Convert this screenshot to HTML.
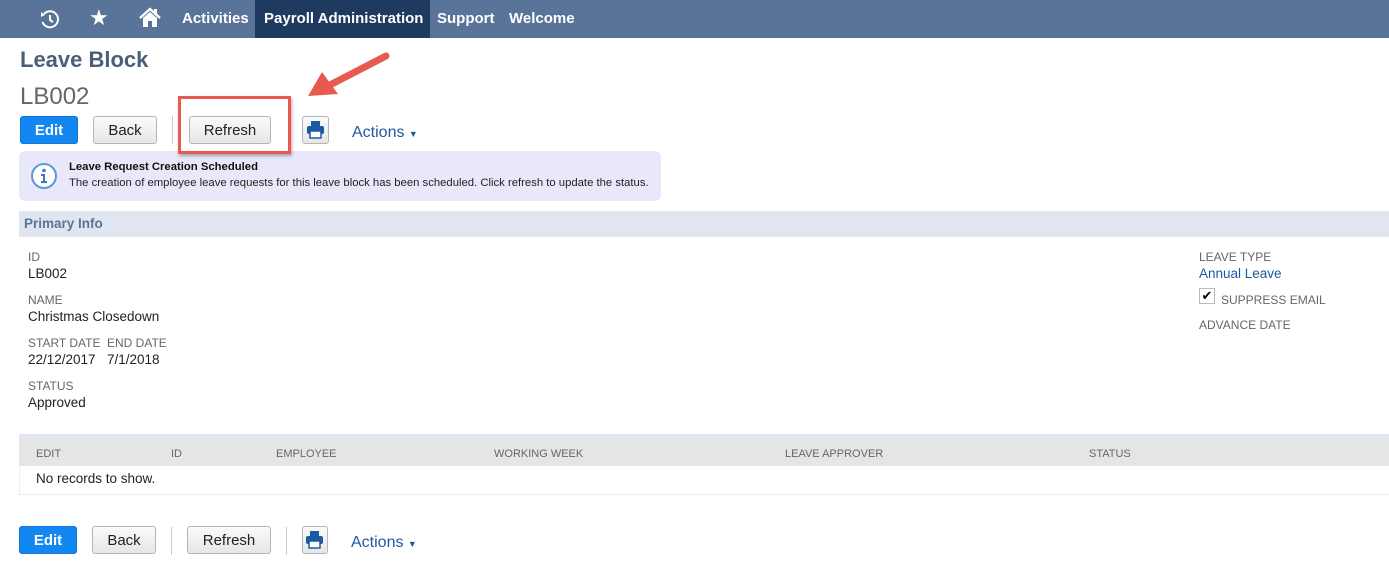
<!DOCTYPE html>
<html><head><style>
body{margin:0;width:1389px;height:568px;overflow:hidden;background:#fff;font-family:"Liberation Sans",sans-serif;position:relative}
.a{position:absolute;white-space:nowrap}
.nav{position:absolute;left:0;top:0;width:1389px;height:38px;background:#5a7499}
.nt{position:absolute;top:0;height:38px;line-height:38px;color:#fff;font-weight:bold;font-size:15px}
.btn{position:absolute;border:1px solid #b5b5b5;border-radius:3px;background:linear-gradient(#fafafa,#e6e6e6);font-size:15px;color:#222;text-align:center;line-height:28px;box-sizing:border-box;height:28px}
.edit{background:#1287f0;border-color:#0f76d8;color:#fff;font-weight:bold}
.sep{position:absolute;width:1px;height:28px;background:#ccc}
.lbl{font-size:12px;color:#666}
.val{font-size:13.5px;color:#222}
.act{color:#1c5aa0;font-size:16px}
.th{font-size:11px;color:#666;top:448px}
</style></head><body>
<div class="nav"></div>
<div class="a" style="left:255px;top:0;width:175px;height:38px;background:#1f3a5f"></div>
<svg class="a" style="left:38px;top:7px" width="24" height="24" viewBox="0 0 24 24"><path d="M6 7 A8 8 0 1 1 4.5 15" fill="none" stroke="#fff" stroke-width="2"/><path d="M3 5 L7 8 L3 10Z" fill="#fff"/><path d="M12 8 V13 L15 15" stroke="#fff" stroke-width="2" fill="none"/></svg>
<div class="a" style="left:89px;top:5px;color:#fff;font-size:22px">★</div>
<svg class="a" style="left:138px;top:6px" width="24" height="24" viewBox="0 0 24 24"><path d="M2 12 L12 3 L22 12" fill="none" stroke="#fff" stroke-width="2.5"/><path d="M5 12 V21 H10 V15 H14 V21 H19 V12 L12 6Z" fill="#fff"/><rect x="16" y="3" width="3" height="5" fill="#fff"/></svg>
<div class="nt" style="left:182px">Activities</div>
<div class="nt" style="left:264px">Payroll Administration</div>
<div class="nt" style="left:437px">Support</div>
<div class="nt" style="left:509px">Welcome</div>

<div class="a" style="left:20px;top:47px;font-size:22px;font-weight:bold;color:#4b5f79">Leave Block</div>
<div class="a" style="left:20px;top:83px;font-size:24px;color:#666">LB002</div>

<div class="a" style="left:19px;top:151px;width:642px;height:50px;background:#e8e8fa;border-radius:6px"></div>

<div class="btn edit" style="left:20px;top:116px;width:58px">Edit</div>
<div class="btn" style="left:93px;top:116px;width:64px">Back</div>
<div class="sep" style="left:172px;top:116px"></div>
<div class="btn" style="left:189px;top:116px;width:82px">Refresh</div>
<div class="a" style="left:178px;top:96px;width:107px;height:52px;border:3px solid #e85a4f;box-shadow:1px 2px 3px rgba(0,0,0,.3);z-index:2"></div>
<div class="btn" style="left:302px;top:116px;width:27px"></div>
<svg class="a" style="left:306px;top:120px" width="19" height="19" viewBox="0 0 19 19"><rect x="5" y="1" width="9" height="5" fill="#1c5aa0"/><rect x="1" y="6" width="17" height="8" rx="2" fill="#1c5aa0"/><rect x="4" y="11" width="11" height="7" fill="#fff" stroke="#1c5aa0" stroke-width="1.5"/></svg>
<div class="a act" style="left:352px;top:124px">Actions <span style="font-size:9px">▼</span></div>
<svg class="a" style="left:300px;top:48px" width="95" height="50"><line x1="86" y1="8" x2="28" y2="38" stroke="#e85a4f" stroke-width="7" stroke-linecap="round"/><path d="M8 48 L22 24 L38 46Z" fill="#e85a4f"/></svg>

<svg class="a" style="left:30px;top:162px" width="28" height="28"><circle cx="14" cy="14" r="12" fill="#fff" stroke="#5b9bd5" stroke-width="2"/><circle cx="14" cy="8.5" r="1.8" fill="#3a7bc0"/><path d="M11 12 H15 V19 H17 V21 H11 V19 H13 V14 H11Z" fill="#3a7bc0"/></svg>
<div class="a" style="left:69px;top:161px;font-size:11.3px;font-weight:bold;color:#111">Leave Request Creation Scheduled</div>
<div class="a" style="left:69px;top:177px;font-size:11.3px;color:#222">The creation of employee leave requests for this leave block has been scheduled. Click refresh to update the status.</div>

<div class="a" style="left:19px;top:211px;width:1370px;height:26px;background:#e0e6ef"></div>
<div class="a" style="left:24px;top:216px;font-size:13.5px;font-weight:bold;color:#5a7499">Primary Info</div>

<div class="a lbl" style="left:28px;top:250px">ID</div>
<div class="a val" style="left:28px;top:266px">LB002</div>
<div class="a lbl" style="left:28px;top:293px">NAME</div>
<div class="a val" style="left:28px;top:309px">Christmas Closedown</div>
<div class="a lbl" style="left:28px;top:336px">START DATE</div>
<div class="a lbl" style="left:107px;top:336px">END DATE</div>
<div class="a val" style="left:28px;top:352px">22/12/2017</div>
<div class="a val" style="left:107px;top:352px">7/1/2018</div>
<div class="a lbl" style="left:28px;top:379px">STATUS</div>
<div class="a val" style="left:28px;top:395px">Approved</div>

<div class="a lbl" style="left:1199px;top:250px">LEAVE TYPE</div>
<div class="a val" style="left:1199px;top:266px;color:#1c5aa0">Annual Leave</div>
<div class="a" style="left:1199px;top:288px;width:14px;height:14px;border:1px solid #bbb;background:#fff;font-size:13px;line-height:14px;text-align:center">✔</div>
<div class="a lbl" style="left:1221px;top:293px">SUPPRESS EMAIL</div>
<div class="a lbl" style="left:1199px;top:318px">ADVANCE DATE</div>

<div class="a" style="left:19px;top:434px;width:1370px;height:5px;background:#e0e6ef"></div>
<div class="a" style="left:19px;top:439px;width:1370px;height:27px;background:#e5e5e5"></div>
<div class="a" style="left:19px;top:466px;width:1369px;height:28px;border:1px solid #eee;border-top:0"></div>
<div class="a th" style="left:36px">EDIT</div>
<div class="a th" style="left:171px">ID</div>
<div class="a th" style="left:276px">EMPLOYEE</div>
<div class="a th" style="left:494px">WORKING WEEK</div>
<div class="a th" style="left:785px">LEAVE APPROVER</div>
<div class="a th" style="left:1089px">STATUS</div>
<div class="a val" style="left:36px;top:471px">No records to show.</div>

<div class="btn edit" style="left:19px;top:526px;width:58px">Edit</div>
<div class="btn" style="left:92px;top:526px;width:64px">Back</div>
<div class="sep" style="left:171px;top:527px"></div>
<div class="btn" style="left:187px;top:526px;width:84px">Refresh</div>
<div class="sep" style="left:286px;top:527px"></div>
<div class="btn" style="left:302px;top:526px;width:26px"></div>
<svg class="a" style="left:305px;top:530px" width="19" height="19" viewBox="0 0 19 19"><rect x="5" y="1" width="9" height="5" fill="#1c5aa0"/><rect x="1" y="6" width="17" height="8" rx="2" fill="#1c5aa0"/><rect x="4" y="11" width="11" height="7" fill="#fff" stroke="#1c5aa0" stroke-width="1.5"/></svg>
<div class="a act" style="left:351px;top:534px">Actions <span style="font-size:9px">▼</span></div>
</body></html>
